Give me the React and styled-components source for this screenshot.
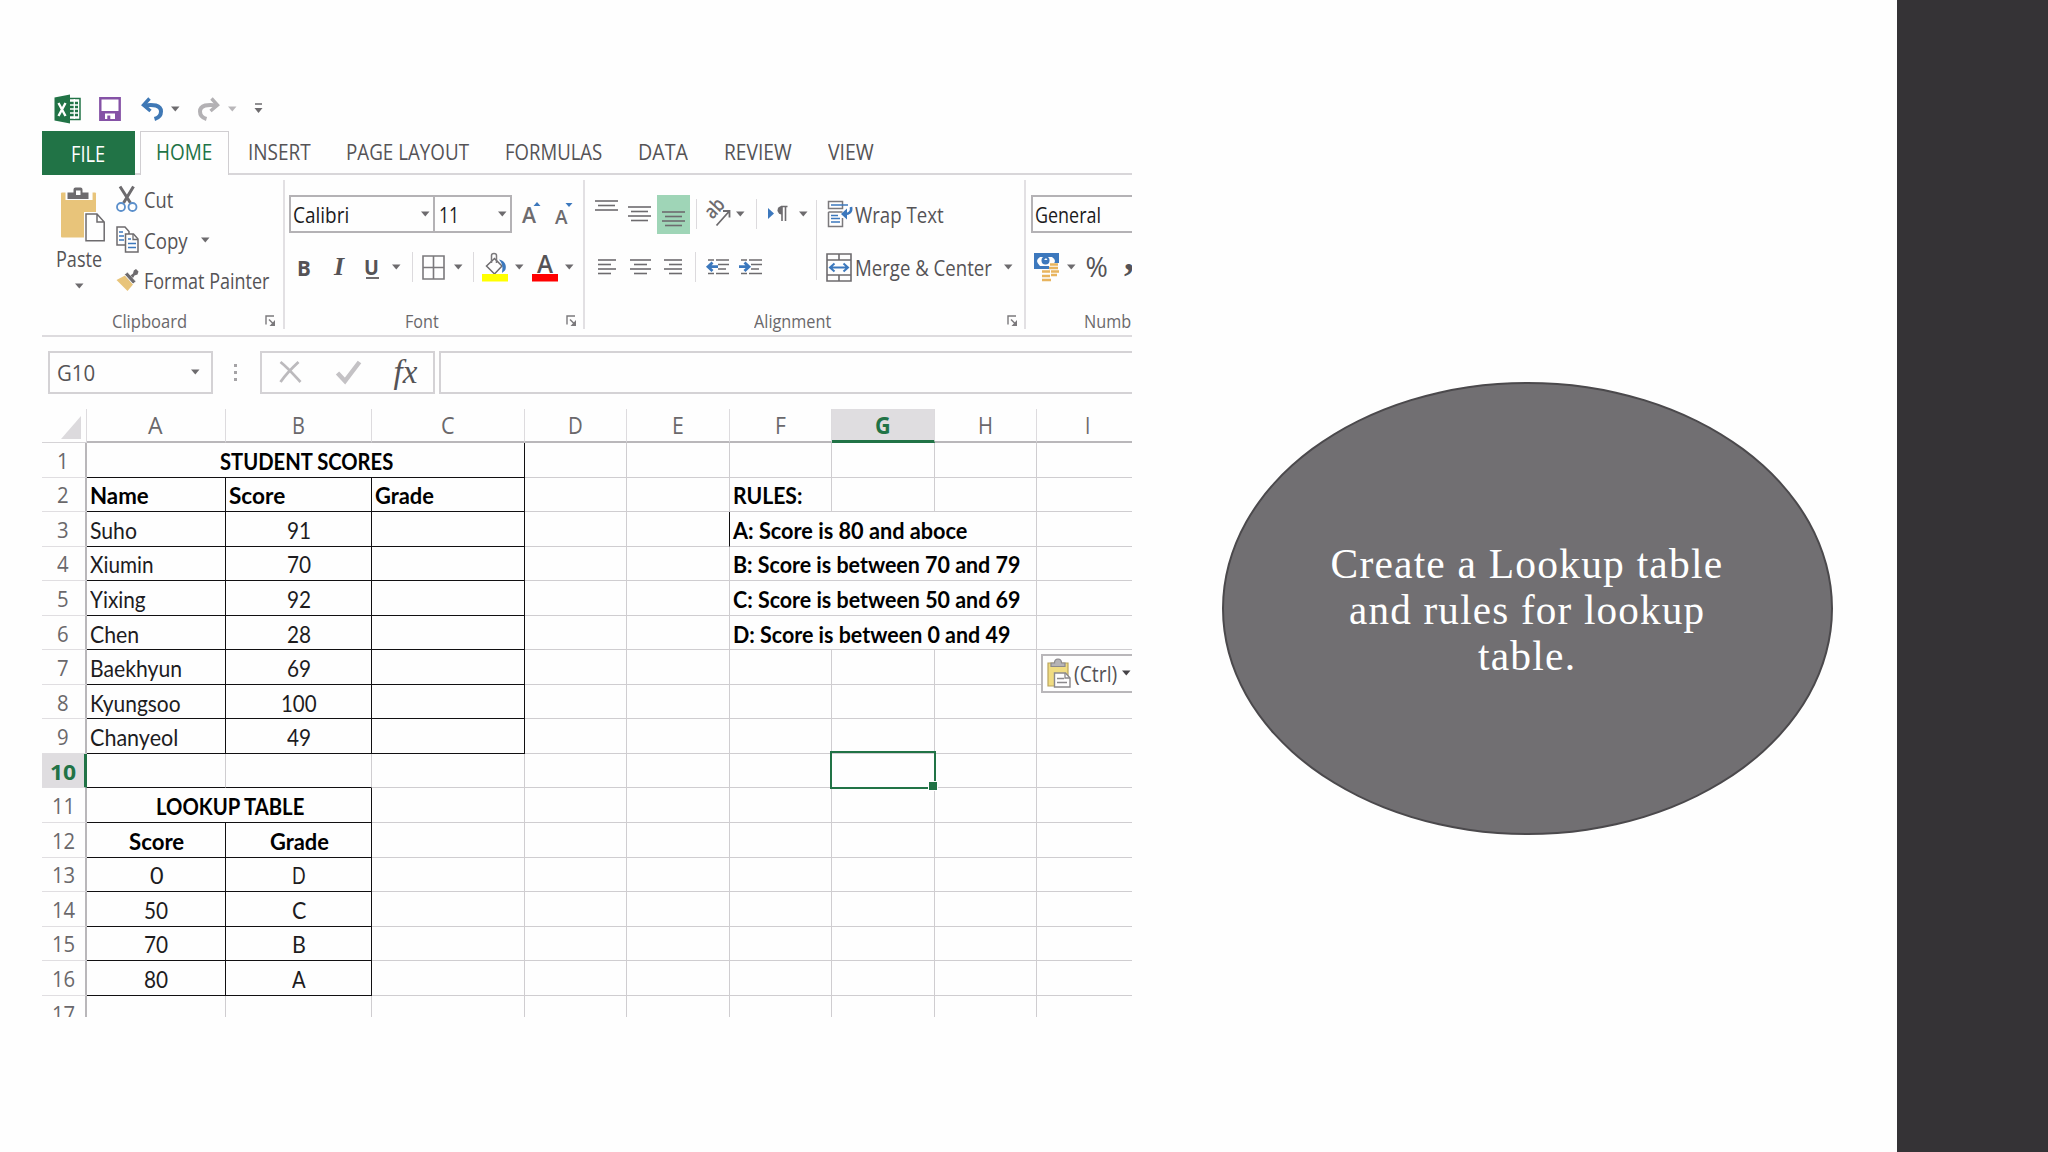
import React, { useLayoutEffect, useRef, useState } from 'react';
import styled, { createGlobalStyle, css } from 'styled-components';

const GlobalStyle = createGlobalStyle`
  * {
    box-sizing: border-box;
  }

  body {
    margin: 0;
    background: #fefefe;
    overflow: hidden;
  }

  svg {
    overflow: visible;
  }
`;

const Slide = styled.div`
  display: flex;
  width: 2048px;
  height: 1152px;
  background: #fefefe;
`;

const SideBand = styled.div`
  width: 151px;
  margin-left: auto;
  background: #353336;
`;

const Bubble = styled.div`
  display: flex;
  flex-direction: column;
  align-items: center;
  justify-content: center;
  width: 611px;
  height: 453px;
  margin: 382px 0 0 90px;
  padding-top: 2px;
  border: 2px solid #4b494c;
  border-radius: 50%;
  background: #716f72;
  color: #fff;
  font-family: 'Liberation Serif', serif;
  font-size: 41.5px;
  letter-spacing: 1.2px;
  line-height: 46px;
`;

const Workbook = styled.div`
  flex: none;
  width: 1090px;
  height: 931px;
  margin: 86px 0 0 42px;
  overflow: hidden;
  font-family: 'Open Sans', sans-serif;
  font-size: 22px;
  line-height: 30px;
  color: #555356;
`;

const FitBox = styled.span`
  display: block;
  flex: none;
  width: ${props => props.$width}px;
  white-space: nowrap;
`;

const FitInner = styled.span`
  display: inline-block;
  margin-left: -1.5px;
  transform-origin: 0 50%;
`;

const Slot = styled.div`
  display: flex;
  flex: none;
  align-items: center;
  justify-content: center;
  width: ${props => props.$w}px;
  margin-left: ${props => props.$ml || 0}px;

  svg {
    display: block;
    flex: none;
  }
`;

const QuickAccess = styled.div`
  display: flex;
  align-items: center;
  height: 45px;
  padding-left: 12px;
`;

const TabBar = styled.div`
  display: flex;
  height: 44px;
  border-bottom: 2px solid #d8d6d9;
`;

const FileTab = styled.div`
  display: flex;
  justify-content: center;
  width: 93px;
  height: 44px;
  padding-top: 7px;
  background: #217346;
  color: #fff;
`;

const HomeTab = styled.div`
  display: flex;
  justify-content: center;
  width: 89px;
  height: 44px;
  margin-left: 5px;
  padding-top: 4px;
  border: 1px solid #d0ced1;
  border-bottom: none;
  background: #fefefe;
  color: #217346;
`;

const Tab = styled.div`
  margin-left: ${props => props.$ml}px;
  padding-top: 5px;
`;

const Ribbon = styled.div`
  display: flex;
  height: 162px;
  padding-top: 5px;
  border-bottom: 2px solid #dddbde;
`;

const Group = styled.div`
  flex: none;
  width: ${props => props.$w}px;
  height: 149px;
  border-right: 2px solid #e2e0e3;
`;

const GroupBody = styled.div`
  display: flex;
  height: 131px;
`;

const GroupFooter = styled.div`
  display: flex;
  align-items: center;
  height: 18px;
  padding-top: 1px;
  font-size: 19px;
  line-height: 18px;
  color: #6a686b;
`;

const PasteColumn = styled.div`
  display: flex;
  flex-direction: column;
  width: 48px;
  margin-left: 15px;
  padding-top: 7px;

  svg {
    display: block;
    margin-left: 4px;
  }
`;

const PasteCaret = styled.div`
  margin: 10px 0 0 14px;
`;

const PasteLabel = styled.div`
  padding-top: 1px;
`;

const ClipboardList = styled.div`
  margin-left: 11px;
`;

const ClipboardItem = styled.div`
  display: flex;
  align-items: center;
  gap: 7px;
  height: 40.5px;
  padding-bottom: 2px;
`;

const ToolColumn = styled.div`
  display: flex;
  flex-direction: column;
  gap: 15px;
  padding-top: 15px;
`;

const ToolRow = styled.div`
  display: flex;
  align-items: center;
  height: 38px;
`;

const FieldBox = styled.div`
  display: flex;
  flex: none;
  align-items: center;
  width: ${props => props.$w}px;
  height: 38px;
  margin-left: ${props => props.$ml || 0}px;
  padding-left: ${props => props.$pl || 4}px;
  border: 2px solid #b4b2b5;
  border-left-width: ${props => (props.$joined ? 0 : 2)}px;
  color: #1b1a1c;
`;

const Rule = styled.div`
  flex: none;
  width: 1px;
  height: ${props => props.$h || 30}px;
  margin-left: ${props => props.$ml}px;
  margin-top: ${props => props.$mt || 0}px;
  background: #dcdadd;
`;

const Pressed = styled.div`
  display: flex;
  align-items: center;
  justify-content: center;
  width: 33px;
  height: 39px;
  margin-left: 5px;
  padding-top: 10px;
  background: #9fd5b7;
`;

const Letter = styled.span`
  font-size: ${props => props.$size || 22}px;
  font-weight: ${props => (props.$bold ? 700 : 400)};
  font-style: ${props => (props.$italic ? 'italic' : 'normal')};
  font-family: ${props => (props.$serif ? "'Liberation Serif', serif" : 'inherit')};
  line-height: 30px;
`;

const Underlined = styled(Letter)`
  line-height: 20px;
  padding-top: 2px;
  border-bottom: 2px solid #6d6b6e;
`;

const Comma = styled.span`
  padding-bottom: 20px;
  font-family: 'Liberation Serif', serif;
  font-size: 40px;
  font-weight: 700;
  line-height: 30px;
`;

const FormulaBar = styled.div`
  display: flex;
  height: 72px;
  padding: 14px 0 0 6px;
`;

const BarBox = styled.div`
  display: flex;
  flex: none;
  align-items: center;
  width: ${props => props.$w}px;
  height: 43px;
  margin-left: ${props => props.$ml || 0}px;
  padding-bottom: 1px;
  border: 2px solid #d4d2d5;
`;

const Dots = styled.div`
  display: flex;
  flex: none;
  flex-direction: column;
  gap: 4px;
  width: 3px;
  margin: 13px 23px 0 21px;

  i {
    height: 3px;
    background: #a5a3a6;
  }
`;

const Grid = styled.div`
  position: relative;
  display: grid;
  grid-template-columns: 45px 139px 146px 153px 102px 103px 102px 103px 102px 103px;
  grid-template-rows: 34px repeat(17, 34.56px);
`;

const ColumnHead = styled.div`
  display: flex;
  align-items: center;
  justify-content: center;
  border-bottom: 2px solid #b9b7ba;
  border-right: 1px solid #dddbde;
  font-size: 23px;
  color: #6a686b;

  ${props =>
    props.$active &&
    css`
      background: #dfdde0;
      border-bottom: 3px solid #217346;
      color: #217346;
      font-weight: 700;
    `}
`;

const Corner = styled.div`
  display: flex;
  align-items: flex-end;
  justify-content: flex-end;
  padding: 0 5px 3px 0;
  border-bottom: 1px solid #d5d3d6;
  border-right: 1px solid #dddbde;
`;

const RowHead = styled.div`
  display: flex;
  align-items: center;
  justify-content: center;
  border-bottom: 1px solid #e0dee1;
  border-right: 2px solid #b9b7ba;
  color: #6a686b;

  ${props =>
    props.$active &&
    css`
      background: #dfdde0;
      border-right: 3px solid #217346;
      color: #217346;
      font-weight: 700;
    `}
`;

const Cell = styled.div`
  display: flex;
  align-items: center;
  justify-content: ${props => (props.$center ? 'center' : 'flex-start')};
  grid-column: span ${props => props.$span || 1};
  padding: 2px 0 0 ${props => (props.$center ? 2 : 4)}px;
  border-right: 1px solid ${props => (props.$right ? '#111012' : '#cfcdd0')};
  border-bottom: 1px solid ${props => (props.$bottom ? '#111012' : '#cfcdd0')};
  color: ${props => (props.$bold ? '#000' : '#1d1c1e')};
  font-family: Lato, sans-serif;
  font-size: 23px;
  font-weight: ${props => (props.$bold ? 700 : 400)};
`;

const Selection = styled.div`
  position: absolute;
  left: 788px;
  top: 342px;
  width: 106px;
  height: 38px;
  border: 2px solid #217346;

  &::after {
    content: '';
    position: absolute;
    right: -4px;
    bottom: -4px;
    width: 8px;
    height: 8px;
    border: 1px solid #fefefe;
    background: #217346;
  }
`;

const PasteOptions = styled.div`
  position: absolute;
  left: 999px;
  top: 245px;
  display: flex;
  align-items: center;
  width: 110px;
  height: 39px;
  padding-left: 4px;
  padding-bottom: 1px;
  border: 2px solid #b9b7ba;
  background: #fefefe;
`;

// Squeezes a label horizontally so that it takes exactly `width` pixels
const FitText = ({ width, children }) => {
  const ref = useRef(null);
  const [scale, setScale] = useState(1);

  useLayoutEffect(() => {
    setScale((width + 2) / ref.current.offsetWidth);
  }, [width, children]);

  return (
    <FitBox $width={width}>
      <FitInner ref={ref} style={{ transform: `scaleX(${scale})` }}>{children}</FitInner>
    </FitBox>
  );
};

const Caret = ({ color = '#6d6b6e' }) => (
  <svg width="9" height="6" viewBox="0 0 9 6">
    <path d="M0 0.5h8.500L4.300 5.500z" fill={color} />
  </svg>
);

const ExcelIcon = () => (
  <svg width="27" height="30" viewBox="0 0 27 30">
    <rect x="13" y="4.5" width="13" height="21" fill="#fff" stroke="#217346" strokeWidth="1.5" />
    <path d="M15 9h9M15 13h9M15 17h9M15 21h9" stroke="#217346" strokeWidth="2.4" />
    <path d="M20.3 5v20" stroke="#fff" strokeWidth="1.3" />
    <path d="M0.5 3.5L16 0.5v29L0.5 26.5z" fill="#217346" />
    <path d="M4.5 9l7 13M11.5 9l-7 13" stroke="#fff" strokeWidth="2.4" />
  </svg>
);

const SaveIcon = () => (
  <svg width="22" height="24" viewBox="0 0 22 24">
    <path d="M1.3 1.3h19.4v21.4H1.3z" fill="#fff" stroke="#8552a6" strokeWidth="2.4" />
    <path d="M1 14h20v9H1z" fill="#8552a6" />
    <path d="M6 16.5h10V22H6z" fill="#fff" />
    <path d="M8.3 18.5h3V23h-3z" fill="#8552a6" />
  </svg>
);

const UndoIcon = ({ color, flip }) => (
  <svg width="23" height="24" viewBox="0 0 23 24">
    <g transform={flip ? 'translate(23 0) scale(-1 1)' : undefined} fill="none" stroke={color}>
      <path d="M3 8.5C12 7 20 8 20 14.5c0 4-3 6.500-6.500 7.500" strokeWidth="4" />
      <path d="M8.500 1.500L2.500 8l7 6" strokeWidth="3.400" />
    </g>
  </svg>
);

const PasteIcon = () => (
  <svg width="44" height="55" viewBox="0 0 44 55">
    <rect x="0" y="5.500" width="35" height="45" rx="1" fill="#e8c47a" />
    <path d="M5.500 4h33v8h-33z" fill="#fefefe" transform="translate(0 1) scale(.82 1)" />
    <path d="M6.500 5.500h6V2.500q0-2 2-2h5q2 0 2 2v3h6V12h-21z" fill="#6d6b6e" />
    <rect x="15" y="3.500" width="4.500" height="4.500" fill="#fefefe" />
    <path d="M23 25h14l7 8v22H23z" fill="#fefefe" />
    <path d="M25 27h11l7.200 8v18.800H25zM36 27v8h7" fill="#fefefe" stroke="#6d6b6e" strokeWidth="1.500" />
  </svg>
);

const CutIcon = () => (
  <svg width="22" height="27" viewBox="0 0 22 27">
    <path d="M4 0.500L14.500 17M17.500 0.500L7.500 17" stroke="#6d6b6e" strokeWidth="3" fill="none" />
    <circle cx="5" cy="21" r="4" fill="none" stroke="#5b8fcb" strokeWidth="1.800" />
    <circle cx="16.500" cy="21" r="4" fill="none" stroke="#5b8fcb" strokeWidth="1.800" />
  </svg>
);

const CopyIcon = () => (
  <svg width="23" height="27" viewBox="0 0 23 27">
    <path d="M1 1h8l4 4.500V19H1z" fill="#fefefe" stroke="#6d6b6e" strokeWidth="1.500" />
    <path d="M3 6h4M3 10h5M3 14h5" stroke="#3c78bd" strokeWidth="1.500" />
    <path d="M9.500 8h8l4.500 5v13H9.500z" fill="#fefefe" stroke="#6d6b6e" strokeWidth="1.500" />
    <path d="M17 8v5.500h5" fill="none" stroke="#6d6b6e" strokeWidth="1.300" />
    <path d="M12 13h3M12 17.500h8M12 21.500h8" stroke="#3c78bd" strokeWidth="1.500" />
  </svg>
);

const PainterIcon = () => (
  <svg width="23" height="22" viewBox="0 0 23 22">
    <path d="M0.500 11l8.500-4.500 8 9-5.500 6.500z" fill="#e8c47a" />
    <path d="M8.500 5.500l3-2.500 8.500 9.500-3 2.500z" fill="#6d6b6e" stroke="#fefefe" strokeWidth="0.800" />
    <path d="M14.500 6.500l2.500-2 .8-3L20 0l2.500 2.500-1 3-3 1-1.500 2.500z" fill="#6d6b6e" />
  </svg>
);

const LauncherIcon = () => (
  <svg width="11" height="12" viewBox="0 0 11 12">
    <path d="M1 9.500V1h8" fill="none" stroke="#7b797c" strokeWidth="1.400" />
    <path d="M4 4.500l4 4" stroke="#7b797c" strokeWidth="1.400" />
    <path d="M10 5v6H4.500z" fill="#7b797c" />
  </svg>
);

const GrowIcon = ({ down }) => (
  <svg width="19" height="24" viewBox="0 0 19 24">
    <text x="0" y={down ? 22 : 21} fontSize={down ? 20 : 22} fontFamily="Open Sans" fontWeight="600" fill="#6d6b6e" textLength={down ? 12.500 : 14} lengthAdjust="spacingAndGlyphs">A</text>
    <path d={down ? 'M10.500 1h7l-3.500 4z' : 'M11.500 4h7L15 0z'} fill="#3c78bd" />
  </svg>
);

const BordersIcon = () => (
  <svg width="23" height="25" viewBox="0 0 23 25">
    <path d="M1 1h21v23H1zM11.500 1v23M1 12.500h21" fill="none" stroke="#7b797c" strokeWidth="1.600" />
  </svg>
);

const FillIcon = () => (
  <svg width="26" height="30" viewBox="0 0 26 30">
    <path d="M4.500 14l8-7.500 7.500 7.500-7.500 8z" fill="#fefefe" stroke="#6d6b6e" strokeWidth="1.500" />
    <path d="M9.500 11V3.500q0-2 2.500-2t2.500 2V11" fill="none" stroke="#7b797c" strokeWidth="1.500" />
    <path d="M17 7.500c5 1 8 5 6.500 10-1 1.800-2.500 2.500-3.500 3.500 .5-5 1.500-8-3-13.500z" fill="#3c78bd" />
    <rect x="0" y="22" width="26" height="7.500" fill="#ffff00" />
  </svg>
);

const FontColorIcon = () => (
  <svg width="26" height="30" viewBox="0 0 26 30">
    <text x="5" y="20.500" fontSize="26" fontFamily="Open Sans" fontWeight="600" fill="#555356" textLength="16" lengthAdjust="spacingAndGlyphs">A</text>
    <rect x="0" y="22" width="26" height="7.500" fill="#ff0000" />
  </svg>
);

// Each line is [start, end]; rows are `step` pixels apart
const LinesIcon = ({ width, lines, step = 4.5 }) => (
  <svg width={width} height={(lines.length - 1) * step + 2} viewBox={`0 0 ${width} ${(lines.length - 1) * step + 2}`}>
    {lines.map(([from, to], i) => (
      <path key={i} d={`M${from} ${i * step + 1}H${to}`} stroke="#6d6b6e" strokeWidth="1.600" />
    ))}
  </svg>
);

const OrientationIcon = () => (
  <svg width="26" height="27" viewBox="0 0 26 27">
    <text x="0" y="0" fontSize="20" fontFamily="Open Sans" fontWeight="600" fill="#6d6b6e" textLength="20" lengthAdjust="spacingAndGlyphs" transform="translate(6.500 19) rotate(-47)">ab</text>
    <path d="M10.500 24.500L23 10.500M17 10h6.500v6.500" fill="none" stroke="#6d6b6e" strokeWidth="1.800" />
  </svg>
);

const DirectionIcon = () => (
  <svg width="21" height="18" viewBox="0 0 21 18">
    <path d="M0 3l6 5.500-6 5.500z" fill="#3c78bd" />
    <path d="M19.500 1.500H13M14 1.500V16M17.500 1.500V16" fill="none" stroke="#6d6b6e" strokeWidth="1.600" />
    <path d="M14 1a4.500 4.200 0 0 0 0 8.400z" fill="#6d6b6e" />
  </svg>
);

const IndentIcon = ({ right }) => (
  <svg width="24" height="18" viewBox="0 0 24 18">
    <path d="M2 2h6M10 2h13M12 6.500h11M12 11h8M2 15.500h6M10 15.500h13" stroke="#6d6b6e" strokeWidth="1.600" />
    <g transform={right ? 'translate(12 0) scale(-1 1)' : undefined} fill="none" stroke="#3c78bd" strokeWidth="2.800">
      <path d="M2 8.700h10M6.500 4.500L2 8.700 6.500 13" />
    </g>
  </svg>
);

const WrapIcon = () => (
  <svg width="26" height="28" viewBox="0 0 26 28">
    <path d="M1.500 1.500h14v7h-14zM1.500 12h14M1.500 12V26.500h14V18" fill="none" stroke="#7b797c" strokeWidth="1.500" />
    <path d="M4 5h17M4 15.500h7M4 18.500h9M4 22h9" stroke="#3c78bd" strokeWidth="1.500" />
    <path d="M24 7c1 5-2 7-6 7" fill="none" stroke="#3c78bd" strokeWidth="2.600" />
    <path d="M14 14l6-5.500v11z" fill="#3c78bd" />
  </svg>
);

const MergeIcon = () => (
  <svg width="26" height="29" viewBox="0 0 26 29">
    <path d="M1 1h24v27H1zM1 7h24M1 22h24M13 1v6M13 22v6" fill="none" stroke="#6d6b6e" strokeWidth="1.600" />
    <path d="M4 14.500h18M8.500 10.500l-4.500 4 4.500 4M17.500 10.500l4.500 4-4.500 4" fill="none" stroke="#3c78bd" strokeWidth="2" />
  </svg>
);

const CurrencyIcon = () => (
  <svg width="27" height="30" viewBox="0 0 27 30">
    <rect x="1" y="1" width="25" height="16" fill="#3c78bd" />
    <path d="M4 9q0-2 3-4h12q3 2 3 4t-3 5H7q-3-3-3-5z" fill="#fefefe" />
    <circle cx="12.500" cy="8.500" r="4" fill="#3c78bd" />
    <path d="M11 8l2-2 1.500 2z" fill="#fefefe" />
    <path d="M16 11h11v15H8v-8h8z" fill="#fefefe" />
    <path d="M17 12.500h8M16 16h9M9 19.500h8M18 19.500h8M9 24h8M18 23h6M9 28h9" stroke="#e8b45e" strokeWidth="2.300" />
  </svg>
);

const CrossIcon = () => (
  <svg width="23" height="24" viewBox="0 0 23 24">
    <path d="M1.500 2C9 8 15 15 21.500 22M19.500 2C13 8 7 14 1.500 22" fill="none" stroke="#bcbabd" strokeWidth="2.800" />
  </svg>
);

const CheckIcon = () => (
  <svg width="25" height="24" viewBox="0 0 25 24">
    <path d="M1.500 13l7.500 8L23.500 2" fill="none" stroke="#c4c2c5" strokeWidth="4.500" />
  </svg>
);

const PasteOptionsIcon = () => (
  <svg width="24" height="30" viewBox="0 0 24 30">
    <path d="M1 5h20v23H1z" fill="#f0dc82" stroke="#b9a45c" strokeWidth="1.200" />
    <path d="M4 8.500V5h3.500q0-4 3.500-4t3.500 4H18v3.500z" fill="#b5b3b6" stroke="#8b898c" strokeWidth="1.200" />
    <path d="M7.500 15h11l4.500 5v9H7.500z" fill="#fefefe" stroke="#8b898c" strokeWidth="1.400" />
    <path d="M10 20.500h7M10 24.500h10M18 15v5h5" fill="none" stroke="#8b898c" strokeWidth="1.300" />
  </svg>
);

const tabs = [
  { name: 'INSERT', ml: 20, width: 61 },
  { name: 'PAGE LAYOUT', ml: 37, width: 121 },
  { name: 'FORMULAS', ml: 38, width: 95 },
  { name: 'DATA', ml: 38, width: 48 },
  { name: 'REVIEW', ml: 38, width: 66 },
  { name: 'VIEW', ml: 38, width: 44 },
];

const columns = [
  ['A', 13], ['B', 11], ['C', 12], ['D', 13], ['E', 10], ['F', 9], ['G', 14], ['H', 13], ['I', 3],
];

const students = [
  ['Suho', 45, '91'],
  ['Xiumin', 62, '70'],
  ['Yixing', 54, '92'],
  ['Chen', 47, '28'],
  ['Baekhyun', 90, '69'],
  ['Kyungsoo', 89, '100'],
  ['Chanyeol', 86, '49'],
];

const lookup = [['0', 'D'], ['50', 'C'], ['70', 'B'], ['80', 'A']];

const rules = {
  3: ['A: Score is 80 and aboce', 232],
  4: ['B: Score is between 70 and 79', 285],
  5: ['C: Score is between 50 and 69', 285],
  6: ['D: Score is between 0 and 49', 275],
};

const valueWidth = text => (/\d/.test(text) ? text.length * 11.2 : 12);

const leftCells = row => {
  if (row === 1) {
    return [{ text: 'STUDENT SCORES', width: 171, bold: true, center: true, span: 3, right: true, bottom: true }];
  }
  if (row === 2) {
    return [['Name', 57], ['Score', 54], ['Grade', 57]].map(([text, width]) => (
      { text, width, bold: true, right: true, bottom: true }
    ));
  }
  if (row <= 9) {
    const [name, width, score] = students[row - 3];
    return [
      { text: name, width, right: true, bottom: true },
      { text: score, width: valueWidth(score), center: true, right: true, bottom: true },
      { right: true, bottom: true },
    ];
  }
  if (row === 10) return [{ bottom: true }, { bottom: true }, {}];
  if (row === 11) {
    return [{ text: 'LOOKUP TABLE', width: 146, bold: true, center: true, span: 2, right: true, bottom: true }, {}];
  }
  if (row === 12) {
    return [
      { text: 'Score', width: 53, bold: true, center: true, right: true, bottom: true },
      { text: 'Grade', width: 57, bold: true, center: true, right: true, bottom: true },
      {},
    ];
  }
  if (row <= 16) {
    return [
      ...lookup[row - 13].map(text => ({ text, width: valueWidth(text), center: true, right: true, bottom: true })),
      {},
    ];
  }
  return [{}, {}, {}];
};

const rightCells = row => {
  if (rules[row]) {
    const [text, width] = rules[row];
    return [{}, { right: row === 3 }, { text, width, bold: true, span: 3 }, {}];
  }
  if (row === 2) return [{}, {}, { text: 'RULES:', width: 67, bold: true }, {}, {}, {}];
  return [{}, {}, {}, {}, {}, {}];
};

const ClipboardGroup = () => (
  <Group $w={243}>
    <GroupBody>
      <PasteColumn>
        <PasteIcon />
        <PasteLabel><FitText width={44}>Paste</FitText></PasteLabel>
        <PasteCaret><Caret /></PasteCaret>
      </PasteColumn>
      <ClipboardList>
        <ClipboardItem>
          <Slot $w={22}><CutIcon /></Slot>
          <FitText width={27}>Cut</FitText>
        </ClipboardItem>
        <ClipboardItem>
          <Slot $w={22}><CopyIcon /></Slot>
          <FitText width={42}>Copy</FitText>
          <Slot $w={9} $ml={7}><Caret /></Slot>
        </ClipboardItem>
        <ClipboardItem>
          <Slot $w={22}><PainterIcon /></Slot>
          <FitText width={123}>Format Painter</FitText>
        </ClipboardItem>
      </ClipboardList>
    </GroupBody>
    <GroupFooter>
      <Slot $w={73} $ml={71}><FitText width={73}>Clipboard</FitText></Slot>
      <Slot $w={11} $ml={79}><LauncherIcon /></Slot>
    </GroupFooter>
  </Group>
);

const FontGroup = () => (
  <Group $w={300}>
    <GroupBody>
      <ToolColumn>
        <ToolRow>
          <FieldBox $w={146} $ml={4} $pl={3}>
            <FitText width={54}>Calibri</FitText>
            <Slot $w={9} $ml={73}><Caret /></Slot>
          </FieldBox>
          <FieldBox $w={77} $joined $pl={5}>
            <FitText width={18}>11</FitText>
            <Slot $w={9} $ml={40}><Caret /></Slot>
          </FieldBox>
          <Slot $w={19} $ml={10}><GrowIcon /></Slot>
          <Slot $w={19} $ml={14}><GrowIcon down /></Slot>
        </ToolRow>
        <ToolRow>
          <Slot $w={14} $ml={12}><Letter $bold><FitText width={12}>B</FitText></Letter></Slot>
          <Slot $w={12} $ml={22}><Letter $serif $italic $bold $size={26}>I</Letter></Slot>
          <Slot $w={14} $ml={20}><Underlined $bold $size={21}><FitText width={13}>U</FitText></Underlined></Slot>
          <Slot $w={9} $ml={13}><Caret /></Slot>
          <Rule $ml={11} />
          <Slot $w={23} $ml={9}><BordersIcon /></Slot>
          <Slot $w={9} $ml={9}><Caret /></Slot>
          <Rule $ml={10} />
          <Slot $w={26} $ml={8}><FillIcon /></Slot>
          <Slot $w={9} $ml={7}><Caret /></Slot>
          <Slot $w={26} $ml={8}><FontColorIcon /></Slot>
          <Slot $w={9} $ml={7}><Caret /></Slot>
        </ToolRow>
      </ToolColumn>
    </GroupBody>
    <GroupFooter>
      <Slot $w={32} $ml={121}><FitText width={32}>Font</FitText></Slot>
      <Slot $w={11} $ml={128}><LauncherIcon /></Slot>
    </GroupFooter>
  </Group>
);

const TopAlignBox = styled.div`
  padding-bottom: 17px;
`;

const TopAlign = () => (
  <TopAlignBox>
    <LinesIcon width={24} lines={[[0, 23], [3, 20], [0, 23]]} />
  </TopAlignBox>
);

const AlignmentGroup = () => (
  <Group $w={441}>
    <GroupBody>
      <ToolColumn>
        <ToolRow>
          <Slot $w={24} $ml={10}><TopAlign /></Slot>
          <Slot $w={24} $ml={9}><LinesIcon width={24} lines={[[0, 23], [3, 20], [0, 23], [3, 20]]} /></Slot>
          <Pressed><LinesIcon width={24} lines={[[0, 23], [3, 20], [0, 23], [3, 20]]} /></Pressed>
          <Rule $ml={6} />
          <Slot $w={26} $ml={9}><OrientationIcon /></Slot>
          <Slot $w={9} $ml={4}><Caret /></Slot>
          <Rule $ml={11} />
          <Slot $w={21} $ml={11}><DirectionIcon /></Slot>
          <Slot $w={9} $ml={10}><Caret /></Slot>
        </ToolRow>
        <ToolRow>
          <Slot $w={20} $ml={13}><LinesIcon width={20} lines={[[0, 18], [0, 13], [0, 18], [0, 13]]} /></Slot>
          <Slot $w={22} $ml={12}><LinesIcon width={22} lines={[[0, 21], [4, 17], [0, 21], [4, 17]]} /></Slot>
          <Slot $w={20} $ml={11}><LinesIcon width={20} lines={[[1, 19], [6, 19], [1, 19], [6, 19]]} /></Slot>
          <Rule $ml={12} />
          <Slot $w={24} $ml={10}><IndentIcon /></Slot>
          <Slot $w={24} $ml={9}><IndentIcon right /></Slot>
        </ToolRow>
      </ToolColumn>
      <Rule $ml={8} $h={80} $mt={20} />
      <ToolColumn>
        <ToolRow>
          <Slot $w={26} $ml={10}><WrapIcon /></Slot>
          <Slot $w={87} $ml={3}><FitText width={87}>Wrap Text</FitText></Slot>
        </ToolRow>
        <ToolRow>
          <Slot $w={26} $ml={9}><MergeIcon /></Slot>
          <Slot $w={135} $ml={4}><FitText width={135}>Merge &amp; Center</FitText></Slot>
          <Slot $w={9} $ml={13}><Caret /></Slot>
        </ToolRow>
      </ToolColumn>
    </GroupBody>
    <GroupFooter>
      <Slot $w={75} $ml={170}><FitText width={75}>Alignment</FitText></Slot>
      <Slot $w={11} $ml={177}><LauncherIcon /></Slot>
    </GroupFooter>
  </Group>
);

const NumberGroup = () => (
  <Group $w={130}>
    <GroupBody>
      <ToolColumn>
        <ToolRow>
          <FieldBox $w={140} $ml={5} $pl={3}><FitText width={64}>General</FitText></FieldBox>
        </ToolRow>
        <ToolRow>
          <Slot $w={27} $ml={7}><CurrencyIcon /></Slot>
          <Slot $w={9} $ml={7}><Caret /></Slot>
          <Slot $w={20} $ml={11}><Letter $size={27}><FitText width={20}>%</FitText></Letter></Slot>
          <Slot $w={8} $ml={18}><Comma>,</Comma></Slot>
        </ToolRow>
      </ToolColumn>
    </GroupBody>
    <GroupFooter>
      <Slot $w={45} $ml={59}><FitText width={45}>Numb</FitText></Slot>
    </GroupFooter>
  </Group>
);

const Spreadsheet = () => (
  <Grid>
    <Corner>
      <svg width="20" height="23" viewBox="0 0 20 23"><path d="M20 0v23H0z" fill="#dcdadd" /></svg>
    </Corner>
    {columns.map(([name, width]) => (
      <ColumnHead key={name} $active={name === 'G'}><FitText width={width}>{name}</FitText></ColumnHead>
    ))}
    {Array.from({ length: 17 }, (_, i) => i + 1).map(row => (
      <React.Fragment key={row}>
        <RowHead $active={row === 10}>
          <FitText width={row < 10 ? 10 : row === 10 ? 24 : 21}>{row}</FitText>
        </RowHead>
        {[...leftCells(row), ...rightCells(row)].map((cell, i) => (
          <Cell
            key={i}
            $span={cell.span}
            $center={cell.center}
            $bold={cell.bold}
            $right={cell.right}
            $bottom={cell.bottom}
          >
            {cell.text && <FitText width={cell.width}>{cell.text}</FitText>}
          </Cell>
        ))}
      </React.Fragment>
    ))}
    <Selection />
    <PasteOptions>
      <PasteOptionsIcon />
      <Slot $w={41} $ml={4}><FitText width={41}>(Ctrl)</FitText></Slot>
      <Slot $w={9} $ml={6}><Caret color="#454346" /></Slot>
    </PasteOptions>
  </Grid>
);

const App = () => {
  return (
    <Slide>
      <GlobalStyle />
      <Workbook>
        <QuickAccess>
          <Slot $w={27}><ExcelIcon /></Slot>
          <Slot $w={22} $ml={18}><SaveIcon /></Slot>
          <Slot $w={23} $ml={20}><UndoIcon color="#3f78b5" /></Slot>
          <Slot $w={9} $ml={7}><Caret /></Slot>
          <Slot $w={23} $ml={17}><UndoIcon color="#b3b1b4" flip /></Slot>
          <Slot $w={9} $ml={8}><Caret color="#b9b7ba" /></Slot>
          <Slot $w={9} $ml={17}>
            <svg width="9" height="11" viewBox="0 0 9 11">
              <path d="M1 1h7" stroke="#6d6b6e" strokeWidth="1.500" />
              <path d="M0.500 5h8l-4 5z" fill="#6d6b6e" />
            </svg>
          </Slot>
        </QuickAccess>
        <TabBar>
          <FileTab><FitText width={32}>FILE</FitText></FileTab>
          <HomeTab><FitText width={54}>HOME</FitText></HomeTab>
          {tabs.map(tab => (
            <Tab key={tab.name} $ml={tab.ml}><FitText width={tab.width}>{tab.name}</FitText></Tab>
          ))}
        </TabBar>
        <Ribbon>
          <ClipboardGroup />
          <FontGroup />
          <AlignmentGroup />
          <NumberGroup />
        </Ribbon>
        <FormulaBar>
          <BarBox $w={165}>
            <Slot $w={36} $ml={8}><FitText width={36}>G10</FitText></Slot>
            <Slot $w={9} $ml={97}><Caret /></Slot>
          </BarBox>
          <Dots><i /><i /><i /></Dots>
          <BarBox $w={175}>
            <Slot $w={23} $ml={17}><CrossIcon /></Slot>
            <Slot $w={25} $ml={34}><CheckIcon /></Slot>
            <Slot $w={24} $ml={33}><Letter $serif $italic $size={33}><FitText width={22}>fx</FitText></Letter></Slot>
          </BarBox>
          <BarBox $w={720} $ml={4} />
        </FormulaBar>
        <Spreadsheet />
      </Workbook>
      <Bubble>
        <FitText width={391}>Create a Lookup table</FitText>
        <FitText width={354}>and rules for lookup</FitText>
        <FitText width={96}>table.</FitText>
      </Bubble>
      <SideBand />
    </Slide>
  );
};

export default App;
